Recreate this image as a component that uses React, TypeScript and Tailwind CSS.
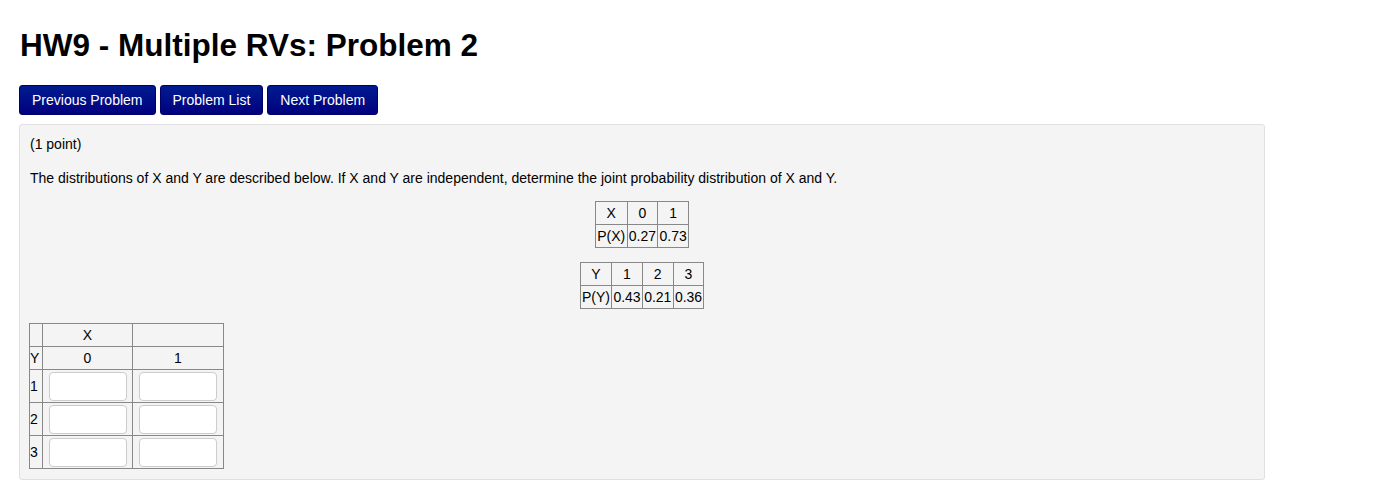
import React from 'react';

const cellCls = "border border-[#888] px-[1.25px] text-center leading-[22px]";

const SmallTable = ({ head, vals }: { head: string[]; vals: string[] }) => (
    <table className="mx-auto border-collapse border border-[#222] text-[14px]">
        <tbody>
            <tr>
                {head.map((h, i) => (
                    <td key={i} className={cellCls}>{h}</td>
                ))}
            </tr>
            <tr>
                {vals.map((v, i) => (
                    <td key={i} className={cellCls}>{v}</td>
                ))}
            </tr>
        </tbody>
    </table>
)

const Box = () => (
    <input type="text" className="w-[78px] h-[29px] rounded-[4px] border border-[#ccc] bg-white outline-none" />
)

export default function App() {
    return (
        <div className="min-h-screen bg-white text-black px-[19px] pt-[25px]" style={{ fontFamily: '"Liberation Sans", Arial, sans-serif' }}>
            <h2 className="text-[31.5px] font-bold leading-[40px] pl-[1px]">HW9 - Multiple RVs: Problem 2</h2>

            <div className="flex gap-[4px] mt-[20px]">
                {["Previous Problem", "Problem List", "Next Problem"].map((b) => (
                    <button key={b} className="h-[30px] px-[12px] rounded-[3px] bg-gradient-to-b from-[#001a8f] to-[#00007f] text-white text-[14px] border border-[#00006a]">
                        {b}
                    </button>
                ))}
            </div>

            <div className="mt-[9px] w-[1246px] bg-[#f4f4f4] border border-[#e0e0e0] rounded-[3px] px-[10px] pt-[9px] pb-[10px] text-[14px]">
                <p className="leading-[20px]">(1 point)</p>
                <p className="mt-[14px] leading-[20px]">The distributions of X and Y are described below. If X and Y are independent, determine the joint probability distribution of X and Y.</p>

                <div className="mt-[13px]">
                    <SmallTable head={["X", "0", "1"]} vals={["P(X)", "0.27", "0.73"]} />
                </div>
                <div className="mt-[14px]">
                    <SmallTable head={["Y", "1", "2", "3"]} vals={["P(Y)", "0.43", "0.21", "0.36"]} />
                </div>

                <table className="mt-[14px] ml-[-1px] border-collapse border border-[#222] text-[14px]">
                    <tbody>
                        <tr>
                            <td className="border border-[#888] w-[13px] h-[23px] p-0"></td>
                            <td className="border border-[#888] text-center h-[23px] w-[90px] p-0">X</td>
                            <td className="border border-[#888] text-center h-[23px] w-[91px] p-0"></td>
                        </tr>
                        <tr>
                            <td className="border border-[#888] h-[23px] p-0">Y</td>
                            <td className="border border-[#888] text-center p-0">0</td>
                            <td className="border border-[#888] text-center p-0">1</td>
                        </tr>
                        {["1", "2", "3"].map((r) => (
                            <tr key={r}>
                                <td className="border border-[#888] h-[33px] p-0">{r}</td>
                                <td className="border border-[#888] text-center align-middle p-0"><Box /></td>
                                <td className="border border-[#888] text-center align-middle p-0"><Box /></td>
                            </tr>
                        ))}
                    </tbody>
                </table>
            </div>
        </div>
    )
}
